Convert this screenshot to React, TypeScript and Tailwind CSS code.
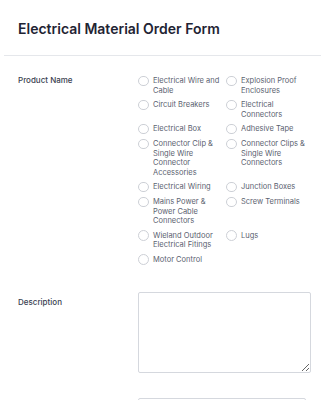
import React from "react";

const products: string[] = [
  "Electrical Wire and Cable",
  "Explosion Proof Enclosures",
  "Circuit Breakers",
  "Electrical Connectors",
  "Electrical Box",
  "Adhesive Tape",
  "Connector Clip & Single Wire Connector Accessories",
  "Connector Clips & Single Wire Connectors",
  "Electrical Wiring",
  "Junction Boxes",
  "Mains Power & Power Cable Connectors",
  "Screw Terminals",
  "Wieland Outdoor Electrical Fitings",
  "Lugs",
  "Motor Control",
];

function Radio({ label }: { label: string }) {
  return (
    <label className="flex items-start">
      <span className="mt-[-0.5px] h-[10.5px] w-[10.5px] shrink-0 rounded-full border border-[#cdd0d6] bg-white" />
      <span className="ml-[4.5px] text-[7.5px] leading-[9.5px] text-[#5b6270]">{label}</span>
    </label>
  );
}

export default function App() {
  return (
    <div className="min-h-[400px] w-[325px] overflow-hidden bg-white" style={{ fontFamily: "Inter, 'Noto Sans', sans-serif" }}>
      <div className="px-[18px] pt-[20px] pb-[17px]">
        <h1 className="text-[14px] font-semibold leading-[18px] text-[#1f2433]">Electrical Material Order Form</h1>
      </div>
      <div className="mx-1 border-b border-[#e5e7eb]" />

      <div className="grid grid-cols-[120px_172px] px-[18px] pt-[20px]">
        <div className="text-[8px] font-medium leading-[9.5px] text-[#3a4150]">Product Name</div>
        <div className="grid grid-cols-[84px_84px] gap-x-[4px] gap-y-[5px]">
          {products.map((p) => (
            <Radio key={p} label={p} />
          ))}
        </div>
      </div>

      <div className="grid grid-cols-[120px_172px] px-[18px] pt-[27px]">
        <div className="pt-[6px] text-[8px] font-medium leading-[9.5px] text-[#3a4150]">Description</div>
        <textarea className="block h-[81px] w-[173px] rounded-[2px] border border-[#d5d8de] bg-white" />
      </div>

      <div className="grid grid-cols-[120px_172px] px-[18px] pt-[25px]">
        <div />
        <div className="h-[30px] w-[168px] rounded-[2px] border border-[#d5d8de] bg-white" />
      </div>
    </div>
  );
}
